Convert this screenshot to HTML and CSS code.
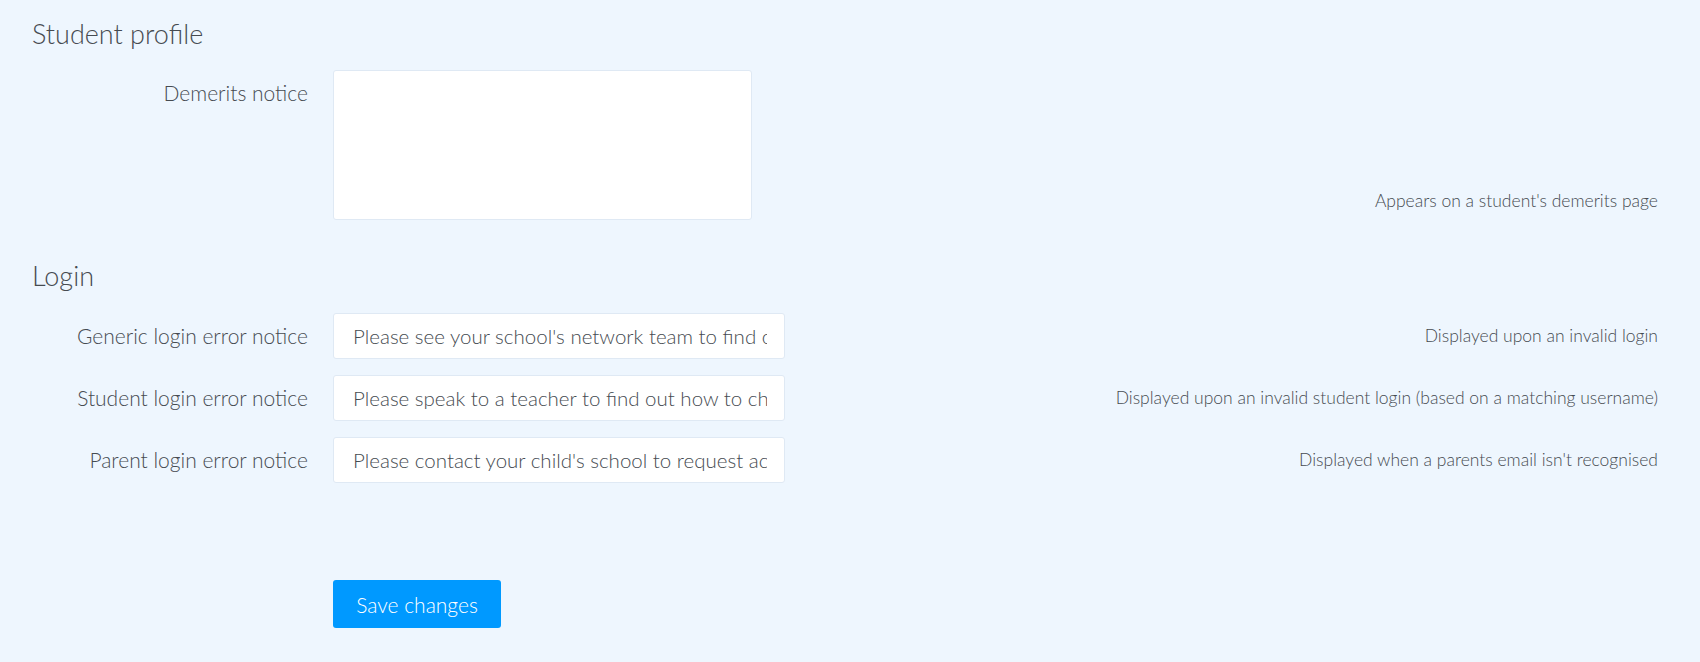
FILE: index.html
```html
<!DOCTYPE html>
<html lang="en">
<head>
<meta charset="utf-8">
<title>Settings</title>
<link rel="stylesheet" href="styles.css">
</head>
<body>
<form class="settings">
  <h2 class="section-title">Student profile</h2>
  <div class="row row-area">
    <label class="label">Demerits notice</label>
    <div class="field"><textarea class="textarea"></textarea></div>
    <div class="help help-bottom">Appears on a student's demerits page</div>
  </div>

  <h2 class="section-title section-login">Login</h2>
  <div class="row row-first">
    <label class="label">Generic login error notice</label>
    <div class="field"><input class="input" type="text" value="Please see your school's network team to find out how to change your password"></div>
    <div class="help">Displayed upon an invalid login</div>
  </div>
  <div class="row">
    <label class="label">Student login error notice</label>
    <div class="field"><input class="input" type="text" value="Please speak to a teacher to find out how to change your password"></div>
    <div class="help">Displayed upon an invalid student login (based on a matching username)</div>
  </div>
  <div class="row">
    <label class="label">Parent login error notice</label>
    <div class="field"><input class="input" type="text" value="Please contact your child's school to request access"></div>
    <div class="help">Displayed when a parents email isn't recognised</div>
  </div>

  <div class="actions">
    <button class="btn" type="button">Save changes</button>
  </div>
</form>
</body>
</html>
```
FILE: styles.css
```css
html, body {
  margin: 0;
  padding: 0;
  background: #eef6fe;
}
body {
  font-family: "Lato Light", Lato, "Open Sans", sans-serif;
  font-weight: 300;
  color: #464b51;
}
.settings {
  padding: 14px 42px 0 32px;
}
.section-title {
  margin: 0;
  font-size: 27px;
  font-weight: 300;
  line-height: 40px;
  color: #464b51;
}
.section-login {
  margin-top: 36px;
}
.row {
  display: grid;
  grid-template-columns: 276px 452px 1fr;
  column-gap: 25px;
  align-items: center;
  margin-bottom: 16px;
}
.row-first {
  margin-top: 17px;
}
.row-area {
  margin-top: 16px;
  align-items: start;
  margin-bottom: 0;
}
.label {
  text-align: right;
  font-size: 21px;
  line-height: 26px;
}
.row-area .label {
  padding-top: 10px;
}
.field {
  display: flex;
}
.textarea {
  width: 419px;
  height: 150px;
  box-sizing: border-box;
  border: 1px solid #dfe9f4;
  border-radius: 3px;
  background: #fff;
  resize: none;
  margin: 0;
  font-family: inherit;
}
.input {
  width: 100%;
  height: 46px;
  box-sizing: border-box;
  border: 1px solid #dfe9f4;
  border-radius: 3px;
  background: #fff;
  padding: 0 17px 0 19px;
  margin: 0;
  font-family: "Lato Light", Lato, "Open Sans", sans-serif;
  font-weight: 300;
  font-size: 20.5px;
  color: #464b51;
}
.help {
  text-align: right;
  font-size: 17.5px;
  line-height: 22px;
}
.help-bottom {
  align-self: end;
  padding-bottom: 8px;
}
.actions {
  padding-left: 301px;
  margin-top: 97px;
}
.btn {
  width: 168px;
  height: 48px;
  border: 0;
  border-radius: 3px;
  background: #0099ff;
  color: #fff;
  font-family: "Lato Light", Lato, "Open Sans", sans-serif;
  font-weight: 300;
  font-size: 21px;
  cursor: pointer;
}
```
